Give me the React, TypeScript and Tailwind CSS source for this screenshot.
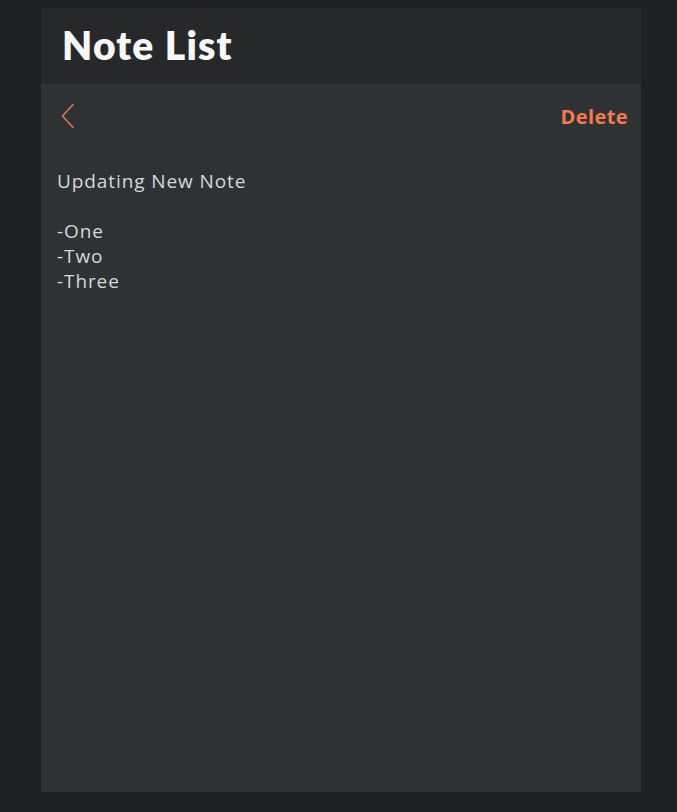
import React from "react";

export default function App() {
  return (
    <div
      className="min-h-screen w-full bg-[#202124] pt-2"
      style={{ fontFamily: "Lato, 'Noto Sans', sans-serif" }}
    >
      <div className="ml-[41px] w-[600px] h-[784px] flex flex-col bg-[#2f3235]">
        <div className="h-[76px] bg-[#272829] flex items-center px-[21px]">
          <h1 className="text-[39px] font-extrabold text-[#f7f8fa] leading-none tracking-[1.2px] mt-[-2px]">
            Note List
          </h1>
        </div>
        <div className="flex items-center justify-between pl-[20px] pr-[13px] pt-[19px]">
          <button className="text-[#e8734a]" aria-label="Back">
            <svg width="14" height="26" viewBox="0 0 14 26" fill="none">
              <path d="M12.5 1 L1.5 13 L12.5 25" stroke="#e8734a" strokeWidth="1.5" />
            </svg>
          </button>
          <span
            className="text-[20px] font-bold text-[#f47a4c] leading-none mt-[2px] tracking-[0.4px]"
            style={{ fontFamily: "'Open Sans', Lato, sans-serif" }}
          >
            Delete
          </span>
        </div>
        <div
          className="px-[16px] pt-[40px] text-[19px] leading-[25px] text-[#d5d8dc] font-medium whitespace-pre tracking-[0.9px]"
          style={{ fontFamily: "'Open Sans', Lato, sans-serif" }}
        >
          {"Updating New Note\n\n-One\n-Two\n-Three"}
        </div>
      </div>
    </div>
  );
}
